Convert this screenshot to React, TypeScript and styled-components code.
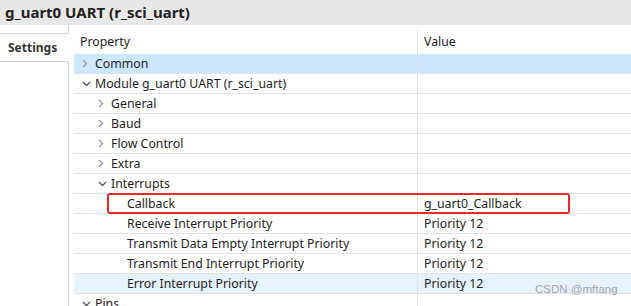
import React from 'react'
import styled, { createGlobalStyle } from 'styled-components'

type Row = {
  label: string
  value?: string
  level: number
  toggle?: 'open' | 'closed'
  tone?: 'selected' | 'hover'
}

const rows: Row[] = [
  { label: 'Common', level: 0, toggle: 'closed', tone: 'selected' },
  { label: 'Module g_uart0 UART (r_sci_uart)', level: 0, toggle: 'open' },
  { label: 'General', level: 1, toggle: 'closed' },
  { label: 'Baud', level: 1, toggle: 'closed' },
  { label: 'Flow Control', level: 1, toggle: 'closed' },
  { label: 'Extra', level: 1, toggle: 'closed' },
  { label: 'Interrupts', level: 1, toggle: 'open' },
  { label: 'Callback', level: 2, value: 'g_uart0_Callback' },
  { label: 'Receive Interrupt Priority', level: 2, value: 'Priority 12' },
  { label: 'Transmit Data Empty Interrupt Priority', level: 2, value: 'Priority 12' },
  { label: 'Transmit End Interrupt Priority', level: 2, value: 'Priority 12' },
  { label: 'Error Interrupt Priority', level: 2, value: 'Priority 12', tone: 'hover' },
  { label: 'Pins', level: 0, toggle: 'open' },
]

const Chevron = ({ open }: { open: boolean }) =>
  open ? (
    <svg width="9" height="6" viewBox="0 0 9 6">
      <path d="M1 1 L4.5 4.5 L8 1" fill="none" stroke="#555" strokeWidth="1.3" />
    </svg>
  ) : (
    <svg width="6" height="9" viewBox="0 0 6 9">
      <path d="M1 1 L4.5 4.5 L1 8" fill="none" stroke="#9a9a9a" strokeWidth="1.3" />
    </svg>
  )

const App: React.FC = () => {
  return (
    <Page>
      <GlobalStyle />
      <TitleBar>g_uart0 UART (r_sci_uart)</TitleBar>
      <Body>
        <Sidebar>
          <TabGap />
          <Tab>Settings</Tab>
          <TabRest />
        </Sidebar>
        <Content>
          <Table>
            <Header>
              <HeadCell>Property</HeadCell>
              <HeadCell divider>Value</HeadCell>
            </Header>
            {rows.map((r, i) => (
              <TableRow key={i} tone={r.tone}>
                <NameCell level={r.level}>
                  <Toggle>{r.toggle && <Chevron open={r.toggle === 'open'} />}</Toggle>
                  {r.label}
                </NameCell>
                <ValueCell>{r.value}</ValueCell>
              </TableRow>
            ))}
            <Highlight />
          </Table>
        </Content>
      </Body>
      <Watermark>CSDN @mftang</Watermark>
    </Page>
  )
}

export default App

const GlobalStyle = createGlobalStyle`
    body {
        margin: 0;
        background: #fff;
        font-family: "Noto Sans", "Open Sans", sans-serif;
        color: #1e1e1e;
    }
`

const Page = styled.div`
    position: relative;
    width: 631px;
    height: 306px;
    overflow: hidden;
    background: #fff;
`

const TitleBar = styled.div`
    height: 25px;
    line-height: 25px;
    padding-left: 5px;
    background: #e8e8e8;
    font-size: 15px;
    font-weight: 700;
    color: #222;
`

const Body = styled.div`
    display: flex;
    height: 281px;
`

const Sidebar = styled.div`
    width: 69px;
    display: flex;
    flex-direction: column;
    flex-shrink: 0;
`

const TabGap = styled.div`
    height: 8px;
    border-right: 1px solid #d4d4d4;
    border-bottom: 1px solid #d4d4d4;
`

const Tab = styled.div`
    height: 27px;
    line-height: 27px;
    padding-left: 8px;
    font-size: 12px;
    font-weight: 700;
    color: #333;
    border-bottom: 1px solid #d4d4d4;
`

const TabRest = styled.div`
    flex: 1;
    border-right: 1px solid #d4d4d4;
`

const Content = styled.div`
    flex: 1;
    padding-left: 5px;
    padding-top: 5px;
`

const Table = styled.div`
    position: relative;
    font-size: 12.3px;
`

const Header = styled.div`
    display: grid;
    grid-template-columns: 343px 1fr;
    height: 24px;
`

const HeadCell = styled.div<{ divider?: boolean }>`
    line-height: 24px;
    padding-left: 6px;
    border-left: ${p => (p.divider ? '1px solid #e3e3e3' : 'none')};
`

const TableRow = styled.div<{ tone?: 'selected' | 'hover' }>`
    display: grid;
    grid-template-columns: 343px 1fr;
    height: 20px;
    box-sizing: border-box;
    border-bottom: 1px solid #e3e3e3;
    background: ${p => (p.tone === 'selected' ? '#cce8ff' : p.tone === 'hover' ? '#e5f3ff' : 'transparent')};
`

const NameCell = styled.div<{ level: number }>`
    display: flex;
    align-items: center;
    padding-left: ${p => 6 + p.level * 16}px;
    white-space: nowrap;
    overflow: hidden;
`

const Toggle = styled.span`
    width: 15px;
    display: inline-flex;
    align-items: center;
    padding-left: 2px;
    box-sizing: border-box;
`

const ValueCell = styled.div`
    line-height: 19px;
    padding-left: 6px;
    border-left: 1px solid #e3e3e3;
    white-space: nowrap;
`

const Highlight = styled.div`
    position: absolute;
    left: 33px;
    top: 163px;
    width: 459px;
    height: 17px;
    border: 2px solid #ea2a2a;
    border-radius: 3px;
`

const Watermark = styled.div`
    position: absolute;
    left: 535px;
    top: 283px;
    white-space: nowrap;
    font-family: "Liberation Sans", Arial, sans-serif;
    font-size: 11.5px;
    color: #a6a6a6;
`
